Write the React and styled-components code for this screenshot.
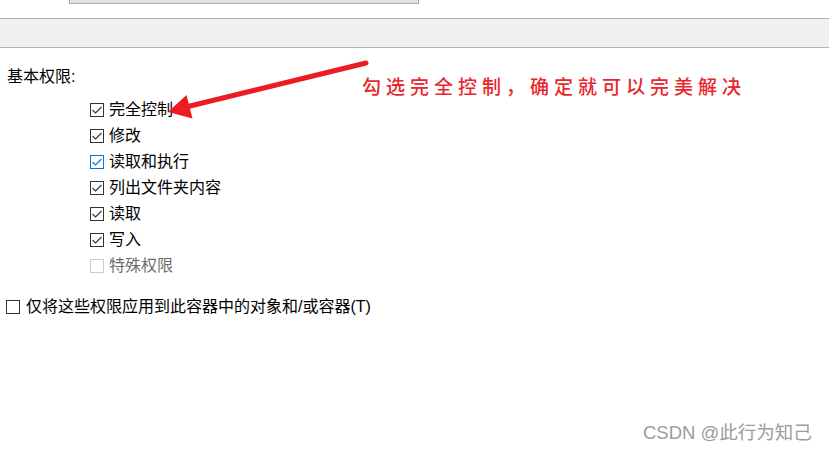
import React from "react";
import styled, { createGlobalStyle } from "styled-components";

const GlobalStyle = createGlobalStyle`
  html, body {
    margin: 0;
    padding: 0;
    background: #ffffff;
  }
  body {
    font-family: "Liberation Sans", "Noto Sans CJK SC", sans-serif;
  }
`;

const Page = styled.div`
  position: relative;
  width: 829px;
  height: 453px;
  overflow: hidden;
  background: #fff;
  color: #000;
  font-size: 16px;
`;

const TopField = styled.div`
  box-sizing: border-box;
  margin-left: 69px;
  width: 350px;
  height: 4px;
  background: #e1e1e1;
  border: 1px solid #adadad;
  border-top: none;
`;

const Band = styled.div`
  box-sizing: border-box;
  margin-top: 14px;
  height: 30px;
  background: #f0f0f0;
  border-top: 1px solid #b4b4b4;
  border-bottom: 1px solid #b4b4b4;
`;

const Section = styled.div`
  padding: 16px 0 0 7px;
`;

const Label = styled.div`
  line-height: 26px;
  height: 26px;
`;

const List = styled.div`
  margin: 7px 0 0 83px;
  display: flex;
  flex-direction: column;
`;

const Row = styled.label`
  display: flex;
  align-items: center;
  gap: 5px;
  height: 26px;
  line-height: 26px;
  color: ${(p) => (p.$disabled ? "#6d6d6d" : "#000")};
`;

const Box = styled.span`
  box-sizing: border-box;
  width: 14px;
  height: 14px;
  flex: none;
  display: flex;
  align-items: center;
  justify-content: center;
  background: #fff;
  border: 1px solid ${(p) => p.$color};
`;

const Inherit = styled(Row)`
  margin: 15px 0 0 -1px;
  gap: 6px;
`;

const Note = styled.div`
  position: absolute;
  left: 362px;
  top: 73px;
  font-family: "Noto Sans CJK SC", sans-serif;
  font-size: 19px;
  font-weight: 500;
  line-height: 26px;
  letter-spacing: 5px;
  color: #e8262e;
  white-space: nowrap;
`;

const Arrow = styled.svg`
  position: absolute;
  left: 0;
  top: 0;
  pointer-events: none;
`;

const Mark = styled.div`
  position: absolute;
  left: 643px;
  top: 421px;
  font-family: "Liberation Sans", "Noto Sans CJK SC", sans-serif;
  font-size: 18.5px;
  line-height: 24px;
  color: #9c9c9c;
  white-space: nowrap;
`;

const perms = [
  { name: "完全控制", checked: true },
  { name: "修改", checked: true },
  { name: "读取和执行", checked: true, focus: true },
  { name: "列出文件夹内容", checked: true },
  { name: "读取", checked: true },
  { name: "写入", checked: true },
  { name: "特殊权限", checked: false, disabled: true },
];

function CheckBox({ checked, focus, disabled }) {
  const color = disabled ? "#cccccc" : focus ? "#0078d7" : "#333333";
  return (
    <Box $color={color}>
      {checked && (
        <svg width="12" height="12" viewBox="0 0 12 12">
          <polyline
            points="1.5,6 4.5,9 10.5,3"
            fill="none"
            stroke={focus ? "#0078d7" : "#333"}
            strokeWidth="1.1"
          />
        </svg>
      )}
    </Box>
  );
}

export default function App() {
  return (
    <>
      <GlobalStyle />
      <Page>
        <TopField />
        <Band />
        <Section>
          <Label>基本权限:</Label>
          <List>
            {perms.map((p) => (
              <Row key={p.name} $disabled={p.disabled}>
                <CheckBox {...p} />
                {p.name}
              </Row>
            ))}
          </List>
          <Inherit>
            <CheckBox checked={false} />
            仅将这些权限应用到此容器中的对象和/或容器(T)
          </Inherit>
        </Section>
        <Note>勾选完全控制，确定就可以完美解决</Note>
        <Arrow width="829" height="453" viewBox="0 0 829 453">
          <line
            x1="366"
            y1="63"
            x2="186"
            y2="107"
            stroke="#ec1c24"
            strokeWidth="5"
            strokeLinecap="round"
          />
          <polygon points="168,112 186.5,95 192.5,118.5" fill="#ec1c24" />
        </Arrow>
        <Mark>CSDN @此行为知己</Mark>
      </Page>
    </>
  );
}
